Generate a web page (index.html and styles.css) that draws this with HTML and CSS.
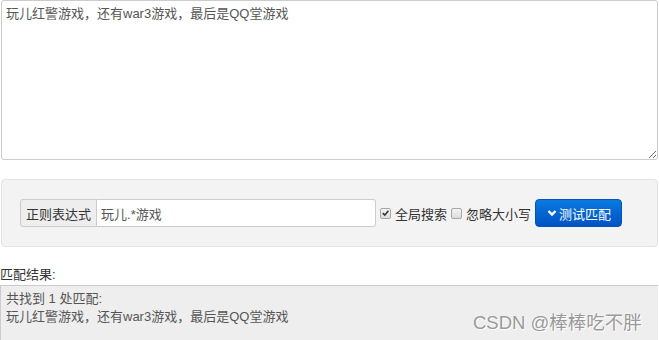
FILE: index.html
```html
<!DOCTYPE html>
<html lang="zh">
<head>
<meta charset="utf-8">
<link rel="stylesheet" href="styles.css">
</head>
<body>
<div class="page">
  <textarea class="source">玩儿红警游戏，还有war3游戏，最后是QQ堂游戏</textarea>
  <div class="well">
    <div class="input-group">
      <span class="addon">正则表达式</span>
      <input class="regex" type="text" value="玩儿.*游戏">
    </div>
    <label class="check"><span class="box checked"><svg viewBox="0 0 10 10" width="10" height="10"><path d="M2 5.2 L4.2 7.4 L8.2 2.6" fill="none" stroke="#333" stroke-width="1.8"/></svg></span>全局搜索</label>
    <label class="check"><span class="box"></span>忽略大小写</label>
    <button class="btn"><svg class="chev" viewBox="0 0 10 10" width="10" height="10"><path d="M1.5 3 L5 6.5 L8.5 3" fill="none" stroke="#fff" stroke-width="2.4"/></svg>测试匹配</button>
  </div>
  <div class="result-label">匹配结果:</div>
  <div class="result">
    <div>共找到 1 处匹配:</div>
    <div>玩儿红警游戏，还有war3游戏，最后是QQ堂游戏</div>
  </div>
  <div class="watermark">CSDN @棒棒吃不胖</div>
</div>
</body>
</html>
```
FILE: styles.css
```css
html, body {
  margin: 0;
  padding: 0;
  background: #fff;
}
body {
  font-family: "Liberation Sans", "Noto Sans CJK SC", sans-serif;
  font-size: 13px;
  color: #333;
}
.page {
  position: relative;
  height: 340px;
  overflow: hidden;
  padding: 0 1px;
}
.source {
  display: block;
  box-sizing: border-box;
  width: 100%;
  height: 160px;
  margin: 0;
  padding: 4px 4px;
  border: 1px solid #ccc;
  border-radius: 3px;
  font-family: inherit;
  font-size: 13px;
  line-height: 18px;
  color: #555;
  resize: both;
  outline: none;
}
.well {
  margin-top: 19px;
  box-sizing: border-box;
  height: 68px;
  padding: 19px 18px;
  background: #f3f3f3;
  border: 1px solid #e3e3e3;
  border-radius: 4px;
  display: flex;
  align-items: center;
  gap: 4px;
}
.input-group {
  display: flex;
  height: 28px;
}
.addon {
  display: flex;
  align-items: center;
  padding: 0 5px;
  background: #eee;
  border: 1px solid #ccc;
  border-radius: 3px 0 0 3px;
  color: #333;
  white-space: nowrap;
}
.regex {
  box-sizing: border-box;
  width: 279px;
  height: 28px;
  margin: 0;
  padding: 0 4px;
  border: 1px solid #ccc;
  border-left: 0;
  border-radius: 0 3px 3px 0;
  font-family: inherit;
  font-size: 13px;
  color: #555;
  outline: none;
  background: #fff;
}
.check {
  display: flex;
  align-items: center;
  gap: 4px;
  color: #333;
  white-space: nowrap;
}
.box {
  box-sizing: border-box;
  width: 11px;
  height: 11px;
  border: 1px solid #a6a6a6;
  border-radius: 2px;
  background: linear-gradient(#f4f4f4, #dcdcdc);
  display: flex;
  align-items: center;
  justify-content: center;
}
.box svg { display: block; }
.btn {
  height: 28px;
  box-sizing: border-box;
  padding: 0 10px 0 11px;
  border: 1px solid #0253b6;
  border-radius: 4px;
  background: linear-gradient(#0a7ae0, #0052c2);
  color: #fff;
  font-family: inherit;
  font-size: 13px;
  display: flex;
  align-items: center;
  gap: 2px;
  white-space: nowrap;
}
.chev { display: block; }
.result-label {
  margin-top: 19px;
  line-height: 18px;
  margin-left: -1px;
  color: #333;
}
.result {
  margin-top: 1px;
  margin-left: -1px;
  padding: 4px 5px;
  background: #eee;
  border-top: 1px solid #ccc;
  border-left: 1px solid #ccc;
  line-height: 18px;
  color: #555;
  height: 60px;
}
.watermark {
  position: absolute;
  left: 473px;
  top: 308px;
  font-size: 18.5px;
  color: #999;
  text-shadow: 0 0 2px #fff, 1px 1px 0 #fff;
  white-space: nowrap;
}
```
